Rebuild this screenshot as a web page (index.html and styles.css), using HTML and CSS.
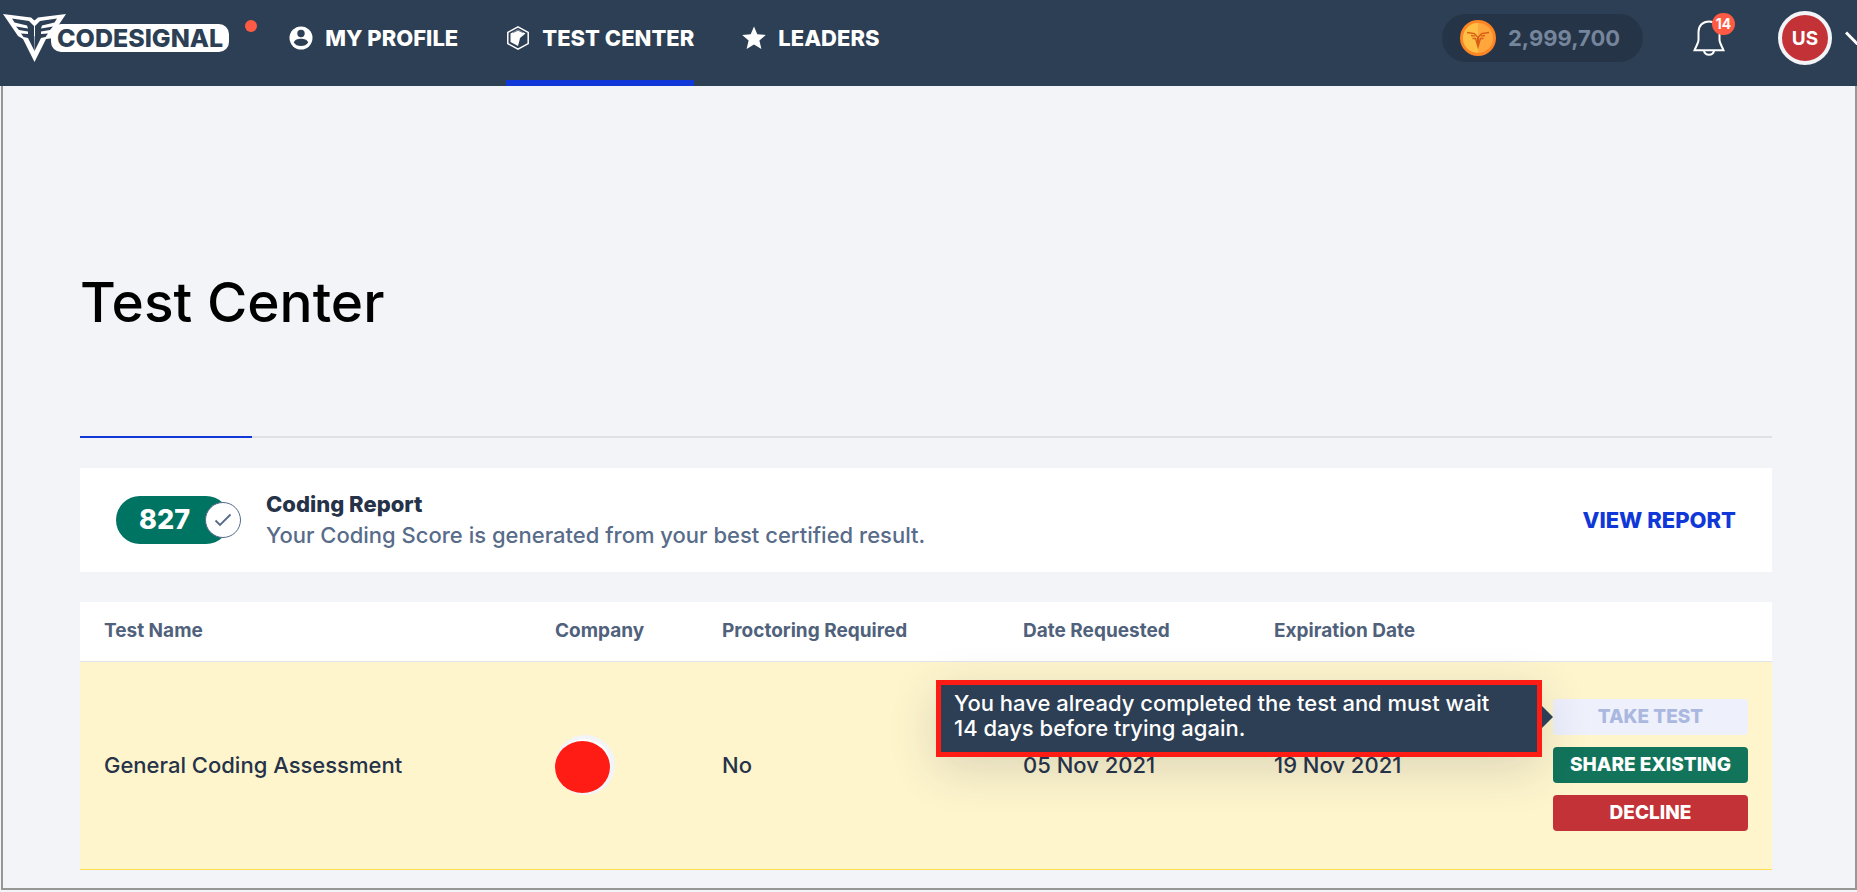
FILE: index.html
```
<!DOCTYPE html>
<html lang="en">
<head>
<meta charset="utf-8">
<title>Test Center</title>
<link rel="stylesheet" href="styles.css">
</head>
<body>
<header class="topbar">
  <a class="logo" href="#" aria-label="CodeSignal">
    <svg class="logo-mark" viewBox="0 0 64 48" aria-hidden="true">
      <path fill="#fff" d="M0 0 L28 3.500 L31.500 6.500 L35 3.500 L63 0 L53 15 L51 24 L43 25 L31.500 48 L20 25 L15 22 Z"/>
      <path id="wing" fill="#2d3f54" d="M9 4.500 L26 7 L31 12 L31.500 37 L25 24 L20.500 23 L18 19.500 L25 20 L25 17.500 L16 16 L13 12.500 L25 14.500 L24 11.500 L11.500 8.500 Z"/>
      <use href="#wing" transform="matrix(-1 0 0 1 63 0)"/>
      <path fill="#fff" d="M31 10h1v12h-1z"/>
    </svg>
    <span class="logo-word">CODESIGNAL</span>
  </a>
  <span class="live-dot"></span>
  <nav class="nav">
    <a class="nav-item" href="#">
      <svg class="nav-icon" viewBox="0 0 24 24" aria-hidden="true"><circle cx="12" cy="12" r="11.5" fill="#fff"/><circle cx="12" cy="7.5" r="3.7" fill="#2d3f54"/><path fill="#2d3f54" d="M4.8 16.5c1-3 4-3.8 7.2-3.8s6.200.8 7.200 3.800c-1.500 2.300-4 3.600-7.200 3.600s-5.700-1.300-7.200-3.600z"/></svg>
      MY PROFILE
    </a>
    <a class="nav-item nav-item-active" href="#">
      <svg class="nav-icon" viewBox="0 0 24 24" aria-hidden="true"><path fill="none" stroke="#fff" stroke-width="1.500" d="M12 .9l10.200 5.500v11.200L12 23.100 1.800 17.600V6.400z"/><path fill="#fff" d="M12 3.500l7.500 4-5.500 4.500-.5 2.500L12 20 4.500 16V7.500z"/><path stroke="#2d3f54" stroke-width=".7" fill="none" d="M7 6.500l5-2.200 5 2.200"/></svg>
      TEST CENTER
    </a>
    <a class="nav-item" href="#">
      <svg class="nav-icon" viewBox="0 0 24 24" aria-hidden="true"><path fill="#fff" d="M12 .5l3.300 7.700 8.500.7-6.400 5.600 2 8.400-7.400-4.400-7.400 4.400 2-8.400L.2 8.900l8.500-.7z"/></svg>
      LEADERS
    </a>
  </nav>
  <div class="account">
    <div class="coins">
      <svg class="coin" viewBox="0 0 36 36" aria-hidden="true"><circle cx="18" cy="18" r="18" fill="#fd8524"/><circle cx="18" cy="18" r="15" fill="#ffa63c"/><path fill="#ffc045" d="M18 3a15 15 0 0 0 0 30z"/><path fill="none" stroke="#d55f16" stroke-width="1.300" d="M7 12.500l7.500 1.200 3 3.300v9M29 12.500l-7.500 1.200-3 3.300v9M11 15.500l4 .7M25 15.500l-4 .7M12.500 18.500h3L18 27l2.500-8.500h3"/></svg>
      <span>2,999,700</span>
    </div>
    <button class="bell" type="button" aria-label="Notifications">
      <svg class="bell-icon" viewBox="0 0 32 36" aria-hidden="true"><path fill="none" stroke="#fff" stroke-width="2" stroke-linejoin="miter" d="M16 1.500c-6 0-10.500 4-10.500 10.500v8c0 3-2.500 6.500-4 10.300h29c-1.500-3.800-4-7.300-4-10.300v-8c0-6.500-4.500-10.500-10.500-10.500zM11 31c.6 2.500 2.500 3.700 5 3.700s4.400-1.200 5-3.700"/></svg>
      <span class="badge">14</span>
    </button>
    <button class="avatar" type="button">US</button>
    <svg class="chevron" viewBox="0 0 12 14" aria-hidden="true"><path fill="none" stroke="#fff" stroke-width="3" d="M1 1.500l12 12"/></svg>
  </div>
</header>
<main class="page">
  <h1 class="title">Test Center</h1>
  <div class="tabs"><span class="tab-active"></span></div>
  <section class="report">
    <div class="score">
      <span class="score-value">827</span>
      <svg class="score-check" viewBox="0 0 36 36" aria-hidden="true"><circle cx="18" cy="18" r="17.500" fill="#fff" stroke="#566a8a"/><path fill="none" stroke="#566a8a" stroke-width="1.800" d="M10.500 18.500l4.500 4.500L25.500 12.500"/></svg>
    </div>
    <div class="report-text">
      <h2 class="report-title">Coding Report</h2>
      <p class="report-note">Your Coding Score is generated from your best certified result.</p>
    </div>
    <a class="report-link" href="#">VIEW REPORT</a>
  </section>
  <table class="tests">
    <colgroup><col class="col-name"><col class="col-company"><col class="col-proctor"><col class="col-requested"><col class="col-expires"><col class="col-actions"></colgroup>
    <thead>
      <tr><th>Test Name</th><th>Company</th><th>Proctoring Required</th><th>Date Requested</th><th>Expiration Date</th><th></th></tr>
    </thead>
    <tbody>
      <tr>
        <td>General Coding Assessment</td>
        <td><svg class="company" viewBox="0 0 60 60" aria-hidden="true"><circle cx="30" cy="30" r="30" fill="#f3f4f7"/><circle cx="30" cy="30" r="26" fill="#fff"/><ellipse cx="27.500" cy="32" rx="27.500" ry="26" fill="#ff1c14"/></svg></td>
        <td>No</td>
        <td>05 Nov 2021</td>
        <td>19 Nov 2021</td>
        <td>
          <div class="actions">
            <div class="tip-anchor">
              <button class="btn btn-take" type="button" disabled aria-describedby="wait-tip">TAKE TEST</button>
              <div class="tooltip" id="wait-tip" role="tooltip">You have already completed the test and must wait 14 days before trying again.</div>
            </div>
            <button class="btn btn-share" type="button">SHARE EXISTING</button>
            <button class="btn btn-decline" type="button">DECLINE</button>
          </div>
        </td>
      </tr>
    </tbody>
  </table>
</main>
</body>
</html>
```
FILE: styles.css
```
* { box-sizing: border-box; }
html, body { height: 100%; }
body {
  margin: 0;
  display: flex;
  flex-direction: column;
  background: #f3f4f7;
  color: #263248;
  font-family: Inter, "Liberation Sans", sans-serif;
  font-size: 22px;
  font-weight: 500;
  overflow: hidden;
}
a { color: inherit; text-decoration: none; }
button { font-family: inherit; border: 0; padding: 0; cursor: pointer; }

.topbar {
  flex: none;
  display: flex;
  height: 86px;
  background: #2d3f54;
  color: #fff;
}
.logo { display: flex; align-items: flex-start; padding: 14px 0 0 3px; }
.logo-mark { flex: none; position: relative; width: 64px; height: 48px; }
.logo-word {
  margin: 10px 0 0 -16px;
  padding: 0 6px;
  height: 28px;
  border-radius: 10px;
  background: #fff;
  color: #2d3f54;
  font-size: 25px;
  font-weight: 800;
  line-height: 28px;
}
.live-dot { width: 12px; height: 12px; margin: 20px 32px 0 16px; border-radius: 50%; background: #ff5a43; }
.nav { display: flex; gap: 48px; font-weight: 800; }
.nav-item {
  display: flex;
  align-items: center;
  gap: 12px;
  padding-top: 4px;
  padding-bottom: 8px;
  border-bottom: 6px solid transparent;
  white-space: nowrap;
}
.nav-item-active { border-color: #1038d8; }
.nav-icon { width: 24px; height: 24px; }
.account { display: flex; align-items: center; height: 76px; margin-left: auto; }
.coins {
  display: flex;
  align-items: center;
  gap: 12px;
  width: 201px;
  height: 48px;
  padding-left: 18px;
  border-radius: 24px;
  background: #263447;
  color: #75859b;
  font-weight: 700;
}
.coin { width: 36px; height: 36px; }
.bell { position: relative; width: 32px; height: 36px; margin: 0 53px 0 50px; background: none; color: #fff; }
.bell-icon { display: block; width: 32px; height: 36px; }
.badge {
  position: absolute;
  top: -7px;
  right: -10px;
  width: 23px;
  height: 22px;
  border-radius: 11px;
  background: #ff5a43;
  font-size: 14px;
  font-weight: 700;
  line-height: 22px;
}
.avatar {
  width: 54px;
  height: 54px;
  border: 4px solid #f3f4f7;
  border-radius: 50%;
  background: #c33236;
  color: #fff;
  font-size: 19px;
  font-weight: 700;
}
.chevron { width: 12px; height: 14px; margin-left: 13px; }

.page {
  flex: 1;
  margin: 0 0 2px 1px;
  padding: 0 83px 0 77px;
  border: 2px solid #969896;
  border-top: 0;
}
.title { margin: 0; padding: 180px 0 98px; color: #000; font-size: 55px; font-weight: 500; line-height: 72px; }
.tabs { height: 2px; background: #dfe0e3; }
.tab-active { display: block; width: 172px; height: 2px; background: #1038d8; }
.report {
  display: flex;
  align-items: center;
  height: 104px;
  margin: 30px 0;
  padding: 0 36px;
  background: #fff;
}
.title, .tabs, .report, .tests { flex: none; }
.score { display: flex; align-items: center; margin-right: 25px; }
.score-value {
  width: 114px;
  height: 48px;
  padding-left: 23px;
  border-radius: 24px;
  background: #007462;
  color: #fff;
  font-size: 27px;
  font-weight: 800;
  line-height: 48px;
}
.score-check { width: 36px; height: 36px; margin-left: -25px; }
.report-title { margin: 0; font-size: 22px; font-weight: 800; line-height: 31px; }
.report-note { margin: 0; color: #586c8a; line-height: 31px; }
.report-link { margin-left: auto; color: #1038d8; font-weight: 800; }

.tests { width: 100%; border-collapse: separate; border-spacing: 0; table-layout: fixed; background: #fff; }
.col-name { width: 451px; }
.col-company { width: 167px; }
.col-proctor { width: 301px; }
.col-requested { width: 251px; }
.col-actions { width: 243px; }
.tests th {
  height: 60px;
  padding: 0 0 2px 24px;
  border-bottom: 1px solid #e2e4ec;
  color: #50617b;
  font-size: 19px;
  font-weight: 700;
  text-align: left;
}
.tests td {
  height: 208px;
  padding: 0 0 2px 24px;
  border-bottom: 1px solid #ffdf50;
  background: #fef5cd;
}
.company { display: block; width: 60px; height: 60px; }
.actions { display: flex; flex-direction: column; gap: 12px; padding-right: 24px; }
.tip-anchor { position: relative; display: flex; flex-direction: column; }
.btn { height: 36px; border-radius: 4px; color: #fff; font-size: 19px; font-weight: 800; }
.btn-take { background: #eef0fc; color: #aab8e0; }
.btn-share { background: #12745b; }
.btn-decline { background: #c33236; }
.tooltip {
  position: absolute;
  top: -19px;
  right: calc(100% + 11px);
  width: 606px;
  padding: 6px 26px 11px 13px;
  border: 5px solid #ff1c14;
  background: #2d3f54;
  box-shadow: 0 12px 48px rgba(38, 50, 72, 0.16);
  color: #fff;
  line-height: 25px;
}
.tooltip::after {
  content: "";
  position: absolute;
  top: 21px;
  right: -16px;
  border: 11px solid transparent;
  border-right: 0;
  border-left-color: #2d3f54;
}
```
